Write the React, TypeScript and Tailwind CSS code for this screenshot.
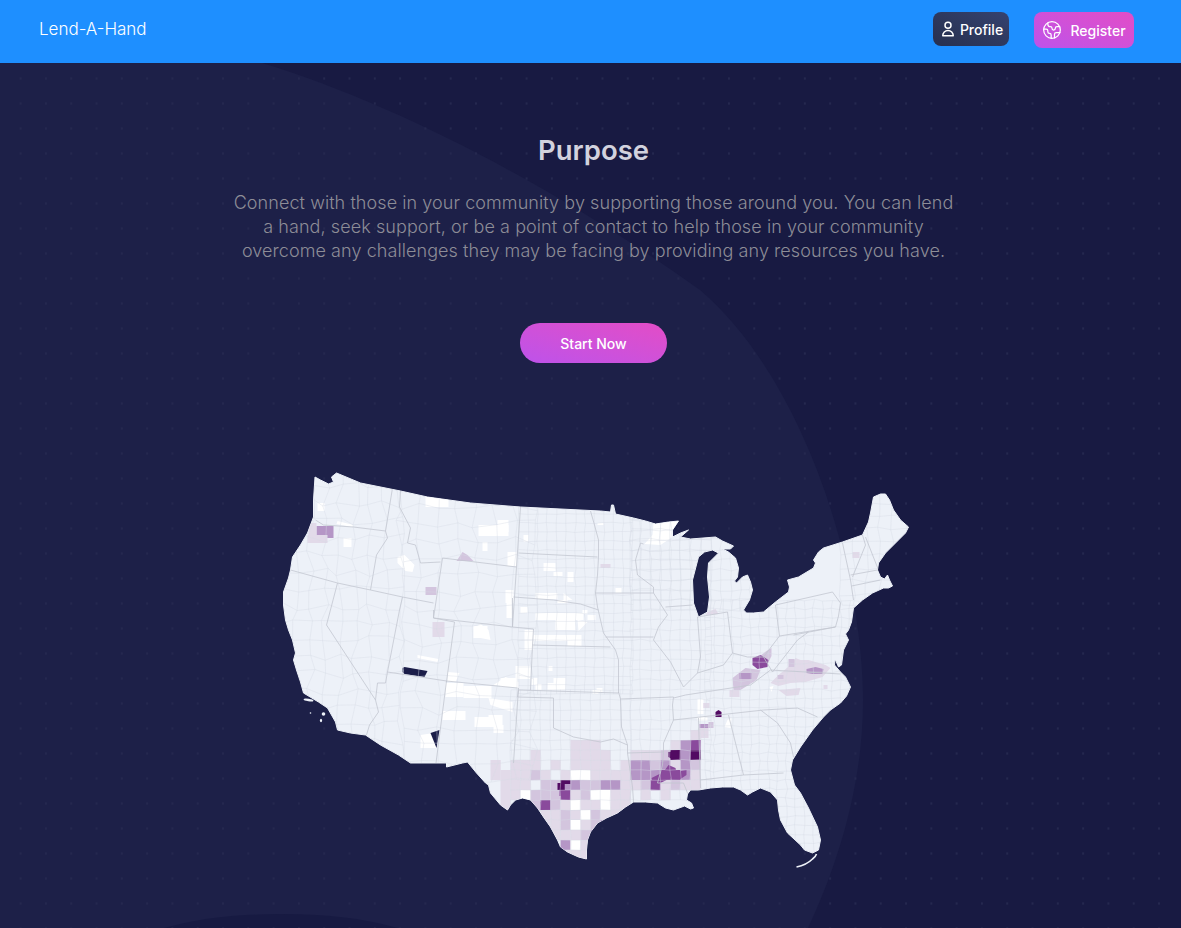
import React from 'react';
import { Earth } from 'lucide-react';
import { HiOutlineUser } from 'react-icons/hi';

const L1 = '#e2dae9';
const L2 = '#d3c5de';
const L3 = '#b596c6';
const L4 = '#8a4a9c';
const L5 = '#520b62';
const WHITE = '#ffffff';
const LAND = '#edf1f8';
const NIGHT = '#1b1d49';

const OUTLINE =
  'M314.5 477 320 480 328 484 333 482 331 477 336 473 360 483 400 491 427 497 470 503 520 507 600 511 610 512 611 505 613 505 615 514 633 518 645 521 655 524 668 522 678 521 672 530 672 537 680 533 688 530 680 537 690 539 715 537 722 541 733 546 730 549 722 549 728 552 735 558 738 568 737 577 734 581 736 583 742 577 747 575 750 582 752 590 749 600 743 610 746 613 753 613 763 612 775 602 788 592 789 587 787 580 798 577 813 568 815 563 813 560 818 552 823 548 842 542 862 535 868 522 870 513 873 497 880 494 885 494 889 500 893 510 900 520 908 527 905 533 895 543 885 553 878 563 877 570 880 577 884 579 887 575 889 580 892 586 888 588 883 588 872 593 862 600 853 608 852 615 851 622 848 630 845 634 848 640 843 650 841 665 838 667 835 660 835 654 834 665 840 672 845 677 850 687 846 696 840 703 830 710 823 717 812 730 800 747 792 760 790 770 794 785 800 793 808 808 817 827 820 840 818 850 812 853 804 850 800 845 787 833 780 820 778 810 777 800 770 792 760 788 752 792 747 795 740 790 733 787 722 787 710 788 698 790 690 790 687 794 686 800 691 803 693 808 690 809 684 806 673 810 665 808 657 803 645 802 633 802 625 807 617 813 606 818 597 823 590 832 587 840 586 850 586 859 578 857 567 852 560 847 557 840 550 827 543 817 537 808 530 800 522 798 515 800 510 805 507 810 500 805 490 793 488 785 485 783 476 773 467 762 462 763 446 767 446 763 410 763 398 755 380 745 365 735 350 733 337 730 335 722 327 708 318 702 303 693 300 682 296 670 293 660 295 653 292 640 288 630 285 620 283 605 283 592 288 578 290 570 292 557 300 545 307 533 313 517 313 500Z';
const LAKE_MICHIGAN = 'M698 557 692 580 693 603 698 617 707 612 709 597 707 577 708 563 718 553 712 550 704 552Z';

const STATE_LINES = [
  '315 520 323 525 353 527 385 531',
  '392 488 385 531 387 538 376 555 370 590',
  '290 570 337 583 370 590 402 597 433 603',
  '400 491 399 507 410 528 407 543 415 545 420 563 440 562',
  '442 558 516 567 512 627 433 618 442 558',
  '520 507 516 567',
  '518 553 597 557',
  '590 511 594 525 598 540 598 557 597 575 595 593 597 607',
  '513 597 553 600 580 604 598 610',
  '643 544 640 543 635 560 637 575 653 587 653 593 667 615 658 627 653 640 670 662 683 687 697 673 723 665 732 653 747 657 763 657 779 636',
  '595 593 653 593',
  '605 637 653 637',
  '597 607 603 633 615 650 618 660 618 693',
  '512 598 512 627 533 629 532 645 610 647',
  '532 645 530 690',
  '518 690 618 693',
  '433 610 433 618 454 622 446 682',
  '399 610 387 672 446 681 517 688',
  '402 597 399 610',
  '337 583 326 625 375 700 378 712 369 725 366 735',
  '387 672 385 683 377 683 375 700',
  '446 681 435 767',
  '518 688 513 763',
  '518 690 517 697 553 698 553 728 573 737 600 742 613 739 627 745 627 753 632 787 633 802',
  '618 692 620 699 621 727 627 745',
  '627 753 663 752',
  '620 699 673 697 672 705 673 720 663 743 663 752 662 765 657 783 683 783 687 793',
  '673 698 685 695 750 685 770 670 840 674',
  '673 720 763 710 797 708 817 717',
  '698 718 700 788',
  '728 715 743 775',
  '700 780 743 775 783 773',
  '760 710 777 723 790 743 793 757',
  '697 617 700 657 697 673',
  '727 612 732 653',
  '665 607 692 605',
  '697 617 727 612',
  '775 605 779 636 835 627 838 616 840 603 832 592 775 605',
  '763 657 772 672',
  '772 672 797 640 808 632',
  '793 635 835 627',
  '842 543 850 580 853 600',
  '851 586 880 580',
  '862 535 865 545 852 577',
  '865 537 878 570',
  '850 575 877 570',
];

type Rect = [number, number, number, number, string];
type Poly = [string, string];

// county-sized cells: . none, w white, 1-5 shade
const SHADES: Record<string, string> = { w: WHITE, '1': L1, '2': L2, '3': L3, '4': L4, '5': L5 };

const TEXAS_ROWS = [
  '.........111....',
  '.....1...1111...',
  '.1.111.1.1111...',
  '.111121.1ww1111.',
  '..111.225322331.',
  '..11w222412ww11.',
  '..1.12421w11w11.',
  '......1121w2111.',
  '......112w123...',
  '.......11123....',
  '........3w1w....',
  '........111.....',
];

const DELTA_ROWS = [
  '........',
  '.......1',
  '.....134',
  '.1112535',
  '13323132',
  '13334431',
  '.1241211',
  '1.1.1...',
];

const gridCells = (rows: string[], x0: number, y0: number): Rect[] =>
  rows.flatMap((row, j) =>
    row.split('').flatMap((ch, i) =>
      SHADES[ch] ? [[x0 + i * 10, y0 + j * 10, 10.2, 10.2, SHADES[ch]] as Rect] : []
    )
  );

const RECTS_UNDER: Rect[] = [
  [316, 526, 17, 12, L3], [308, 523, 8, 14, L1], [307, 535, 20, 8, L1],
  [425, 587, 11, 8, L2], [432, 622, 12, 15, L1], [600, 564, 10, 4, L1], [852, 552, 7, 6, L1],
  ...gridCells(TEXAS_ROWS, 480, 740),
  ...gridCells(DELTA_ROWS, 620, 720),
];

const POLYS_UNDER: Poly[] = [
  ['456 561 462 552 467 555 473 561', L2],
  ['707 612 715 609 718 614 705 615', L1],
  // appalachia
  ['758 657 766 651 771 648 771 656 768 662', L2],
  ['732 678 745 668 760 670 756 680 740 690 733 690', L2],
  ['770 683 778 675 790 665 795 658 800 660 808 660 825 665 830 668 822 677 805 682 790 683 778 686', L1],
  ['778 690 800 688 798 695 786 696', L1],
  ['752 658 760 655 768 660 767 667 757 669 752 665', L4],
  ['806 669 815 667 823 669 822 674 812 674 806 673', L3],
  ['715 712 718 710 721 712 721 717 715 717', L5],
];

const RECTS_OVER: Rect[] = [
  // fine detail on top of the texas cells
  [564, 784, 7, 6, L3], [559, 790, 9, 6, L4], [557, 783, 7, 7, L5], [540, 802, 8, 8, L4],
  [699, 724, 9, 4, L3], [708, 722, 5, 6, L2], [698, 728, 10, 10, L1], [702, 703, 6, 5, L1],
  // appalachia
  [739, 673, 12, 6, L3], [729, 690, 10, 7, L1], [823, 685, 4, 4, L1], [788, 659, 6, 8, L2], [777, 675, 6, 4, L2],
  // whites
  [425, 497, 23, 10, WHITE], [478, 525, 30, 11, WHITE], [497, 520, 11, 12, WHITE], [317, 503, 7, 8, WHITE],
  [343, 538, 8, 9, WHITE], [482, 542, 5, 9, WHITE], [507, 552, 9, 14, WHITE], [523, 535, 5, 7, WHITE],
  [543, 563, 12, 8, WHITE], [553, 572, 9, 4, WHITE], [567, 572, 6, 10, WHITE], [505, 590, 8, 13, WHITE],
  [506, 603, 6, 15, WHITE], [535, 593, 22, 6, WHITE], [557, 600, 10, 3, WHITE], [520, 607, 7, 6, WHITE],
  [535, 613, 48, 7, WHITE], [555, 620, 20, 10, WHITE], [582, 610, 5, 4, WHITE], [587, 615, 8, 5, WHITE],
  [533, 635, 48, 6, WHITE], [567, 640, 14, 6, WHITE], [524, 630, 9, 20, WHITE], [615, 588, 6, 5, WHITE],
  [515, 666, 15, 13, WHITE], [500, 678, 17, 9, WHITE], [548, 666, 4, 5, WHITE], [531, 678, 6, 7, WHITE],
  [535, 684, 6, 6, WHITE], [547, 683, 18, 7, WHITE], [553, 678, 12, 5, WHITE], [596, 688, 6, 4, WHITE],
  [473, 626, 14, 12, WHITE], [445, 683, 18, 14, WHITE], [463, 686, 28, 12, WHITE], [442, 711, 23, 9, WHITE],
  [474, 717, 20, 10, WHITE], [488, 715, 14, 10, WHITE], [493, 725, 10, 8, WHITE], [697, 699, 6, 15, WHITE],
  [697, 717, 10, 4, WHITE], [597, 523, 6, 2, WHITE], [592, 690, 6, 4, WHITE],
  [703, 703, 6, 5, L1],
];

const POLYS_OVER: Poly[] = [
  ['668 752 677 751 678 756 671 759 668 757', L5],
  ['663 772 668 765 675 768 676 772 686 770 686 775 680 779 672 777 660 783 653 787 651 778', L4],
  ['337 521 353 525 352 527 336 524', WHITE],
  ['397 557 404 555 414 565 412 572 405 571 397 563', WHITE],
  ['563 593 572 600 563 600', WHITE],
  ['577 620 587 622 578 631', WHITE],
  ['417 655 438 659 437 662 417 658', WHITE],
  ['447 672 459 673 455 682 447 681', WHITE],
  ['488 698 512 702 512 712 490 705', WHITE],
  ['493 685 505 677 518 682 518 688', WHITE],
  ['473 628 480 624 488 630 490 640 480 638', WHITE],
  ['653 523 668 522 678 521 672 530 672 537 660 545 644 544 652 535', WHITE],
  ['420 735 433 733 436 748 420 748', WHITE],
  ['727 720 731 718 730 728 724 727', WHITE],
  ['769 687 773 686 771 692', WHITE],
  ['430 733 439 730 436 748', NIGHT],
  ['402 668 404 667 427 671 424 677 404 674 402 672', NIGHT],
];

// jittered mesh, stands in for the county boundaries
const hash = (a: number, b: number) => {
  const s = Math.sin(a * 127.1 + b * 311.7) * 43758.5453;
  return s - Math.floor(s) - 0.5;
};

const meshPath = (x0: number, y0: number, x1: number, y1: number, cw: number, ch: number, jitter: number) => {
  const cols = Math.ceil((x1 - x0) / cw);
  const rows = Math.ceil((y1 - y0) / ch);
  const node = (i: number, j: number) => {
    const x = x0 + i * cw + hash(i + x0, j + y0) * jitter;
    const y = y0 + j * ch + hash(j + y0, i + x0 + 9) * jitter;
    return `${x.toFixed(1)} ${y.toFixed(1)}`;
  };
  let d = '';
  for (let i = 0; i <= cols; i++) {
    d += 'M' + Array.from({ length: rows + 1 }, (_, j) => node(i, j)).join(' L');
  }
  for (let j = 0; j <= rows; j++) {
    d += 'M' + Array.from({ length: cols + 1 }, (_, i) => node(i, j)).join(' L');
  }
  return d;
};

const COUNTIES = [
  meshPath(280, 470, 400, 770, 15, 17, 9),
  meshPath(400, 490, 520, 770, 19, 17, 9),
  meshPath(518, 505, 625, 690, 9.5, 9, 1.5),
  meshPath(510, 690, 630, 865, 10, 10, 1.2),
  meshPath(630, 510, 705, 800, 10, 10, 2),
  meshPath(705, 600, 850, 860, 9, 9, 2.5),
  meshPath(630, 520, 750, 610, 10, 10, 3),
  meshPath(840, 490, 915, 600, 13, 13, 4),
].join('');

const UsMap = () => (
  <svg viewBox="265.5 465 650 410" className="mx-auto mt-[102px] block h-[410px] w-[650px]">
    <defs>
      <clipPath id="land">
        <path d={OUTLINE + LAKE_MICHIGAN} clipRule="evenodd" />
      </clipPath>
    </defs>
    <path
      d={OUTLINE + LAKE_MICHIGAN}
      fill={LAND}
      fillRule="evenodd"
      stroke={LAND}
      strokeWidth="1"
      strokeLinejoin="round"
    />
    <g clipPath="url(#land)">
      {RECTS_UNDER.map(([x, y, w, h, c], i) => <rect key={i} x={x} y={y} width={w} height={h} fill={c} />)}
      {POLYS_UNDER.map(([p, c], i) => <polygon key={i} points={p} fill={c} />)}
      {RECTS_OVER.map(([x, y, w, h, c], i) => <rect key={i} x={x} y={y} width={w} height={h} fill={c} />)}
      {POLYS_OVER.map(([p, c], i) => <polygon key={i} points={p} fill={c} />)}
      <path d={COUNTIES} fill="none" stroke="#d8dce6" strokeOpacity="0.8" strokeWidth="0.5" />
      {STATE_LINES.map((p, i) => (
        <polyline key={i} points={p} fill="none" stroke="#c3c6d1" strokeWidth="0.8" />
      ))}
    </g>
    {/* islands and keys */}
    <ellipse cx="308" cy="700" rx="5" ry="1.3" fill={LAND} transform="rotate(8 308 700)" />
    <circle cx="310" cy="713" r="0.8" fill={LAND} />
    <circle cx="323" cy="714" r="1.8" fill={LAND} />
    <ellipse cx="320.5" cy="720.5" rx="1.1" ry="1.8" fill={LAND} />
    <path d="M796 867Q806 865 812 859 815 857 816 854" fill="none" stroke={LAND} strokeWidth="1.6" />
  </svg>
);

export default function App() {
  return (
    <div className="relative min-h-screen overflow-hidden bg-[#181a42] font-[Inter,sans-serif]">
      <svg viewBox="0 0 1181 928" className="absolute inset-0 h-[928px] w-[1181px]">
        <path
          d="M0 63L262 63C400 105 560 190 700 290C800 375 862 560 863 700C863 790 835 870 808 928L0 928Z"
          fill="#1d2048"
        />
        <ellipse cx="281" cy="958" rx="160" ry="44" fill="#171a42" />
      </svg>
      <div className="absolute inset-x-0 bottom-0 top-[63px] bg-[radial-gradient(circle,#25284f_1px,transparent_1.3px)] bg-[length:25.3px_25px] bg-[position:8px_3px]" />

      <header className="relative flex h-[63px] items-start justify-between bg-[#1e8fff] pl-[39px] pr-[47px] pt-3">
        <span className="text-[17px] font-light leading-[34px] text-white">Lend-A-Hand</span>
        <div className="flex items-start gap-[25px]">
          <button className="flex h-[34px] w-[76px] items-center justify-center gap-[3px] rounded-lg bg-gradient-to-tr from-[#27304f] to-[#35426f] text-[14px] font-medium text-white">
            <HiOutlineUser size={18} />
            Profile
          </button>
          <button className="flex h-9 w-[100px] items-center justify-center gap-2 rounded-lg bg-gradient-to-tr from-[#bd52ea] to-[#e34cc6] text-[14px] font-medium text-white">
            <Earth size={20} strokeWidth={1.5} />
            Register
          </button>
        </div>
      </header>

      <main className="relative pt-[66px]">
        <div className="pl-[6px] text-center">
          <h1 className="text-[27.5px] font-semibold leading-[42px] text-[#d2d2de]">Purpose</h1>
          <p className="mt-5 text-[18px] font-light leading-[24px] tracking-[0.075px] text-[#8d8d97]">
            Connect with those in your community by supporting those around you. You can lend
            <br />
            a hand, seek support, or be a point of contact to help those in your community
            <br />
            overcome any challenges they may be facing by providing any resources you have.
          </p>
          <button className="mt-[60px] h-10 w-[147px] rounded-full bg-gradient-to-tr from-[#bd52ea] to-[#e34cc6] text-[14px] font-medium text-white">
            Start Now
          </button>
        </div>
        <UsMap />
      </main>
    </div>
  );
}
